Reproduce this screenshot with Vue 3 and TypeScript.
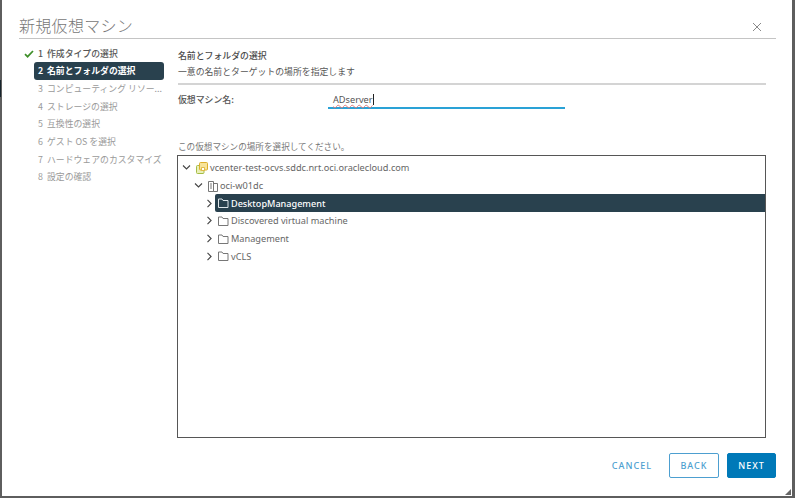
<script setup lang="ts">
interface Step { n: number; label: string; state: 'done' | 'active' | 'todo' }
const steps: Step[] = [
  { n: 1, label: '作成タイプの選択', state: 'done' },
  { n: 2, label: '名前とフォルダの選択', state: 'active' },
  { n: 3, label: 'コンピューティング リソー...', state: 'todo' },
  { n: 4, label: 'ストレージの選択', state: 'todo' },
  { n: 5, label: '互換性の選択', state: 'todo' },
  { n: 6, label: 'ゲスト OS を選択', state: 'todo' },
  { n: 7, label: 'ハードウェアのカスタマイズ', state: 'todo' },
  { n: 8, label: '設定の確認', state: 'todo' },
]
const folders = [
  { name: 'DesktopManagement', selected: true },
  { name: 'Discovered virtual machine', selected: false },
  { name: 'Management', selected: false },
  { name: 'vCLS', selected: false },
]
</script>

<template>
  <div class="modal">
    <span class="edge-mark"></span>
    <header class="head">
      <h1 class="title">新規仮想マシン</h1>
      <svg class="close" width="10" height="10" viewBox="0 0 10 10"><path d="M1 1l8 8M9 1l-8 8" stroke="#8a8a8a" stroke-width="1" fill="none"/></svg>
    </header>
    <div class="body">
      <nav class="steps">
        <div v-for="s in steps" :key="s.n" class="step" :class="s.state">
          <svg v-if="s.state === 'done'" class="check" width="10" height="8" viewBox="0 0 10 8"><path d="M1 4.2l2.6 2.5L9 1" stroke="#3f8f29" stroke-width="1.7" fill="none"/></svg>
          <span class="pill"><span class="num">{{ s.n }}</span>{{ s.label }}</span>
        </div>
      </nav>
      <main class="main">
        <div class="sub-title">名前とフォルダの選択</div>
        <div class="sub-desc">一意の名前とターゲットの場所を指定します</div>
        <div class="name-row">
          <label class="name-label">仮想マシン名:</label>
          <div class="input"><span class="val">ADserver</span><span class="caret"></span></div>
        </div>
        <div class="loc">この仮想マシンの場所を選択してください。</div>
        <div class="tree">
          <div class="row lvl0">
            <svg class="chev" width="9" height="9" viewBox="0 0 9 9"><path d="M1 2.5l3.5 3.5L8 2.5" stroke="#444" stroke-width="1.1" fill="none"/></svg>
            <svg class="ico" width="12" height="12" viewBox="0 0 12 12">
              <rect x="0.5" y="3.5" width="7.500" height="8" rx="1" fill="#e9efb8" stroke="#a5bd45"/>
              <rect x="3.5" y="0.5" width="8" height="7.500" rx="1" fill="#f7e39a" stroke="#dcae2c"/>
              <path d="M5.500 5.500h3v3h-3z" fill="#fff" stroke="#dcae2c" stroke-width=".8"/>
            </svg>
            <span>vcenter-test-ocvs.sddc.nrt.oci.oraclecloud.com</span>
          </div>
          <div class="row lvl1">
            <svg class="chev" width="9" height="9" viewBox="0 0 9 9"><path d="M1 2.5l3.5 3.5L8 2.500" stroke="#444" stroke-width="1.1" fill="none"/></svg>
            <svg class="ico" width="10" height="12" viewBox="0 0 10 12">
              <path d="M.5 1.500h5v10h-5zM5.500 3.500h4v8h-4zM2 4h2M2 6h2M2 8h2" stroke="#777" stroke-width="1" fill="none"/>
            </svg>
            <span>oci-w01dc</span>
          </div>
          <div v-for="f in folders" :key="f.name" class="row lvl2">
            <svg class="chev" width="9" height="9" viewBox="0 0 9 9"><path d="M2.500 .8l3.600 3.700-3.600 3.700" stroke="#444" stroke-width="1.1" fill="none"/></svg>
            <div class="label-wrap" :class="{ selected: f.selected }">
              <svg class="ico" width="11" height="10" viewBox="0 0 11 10">
                <path d="M.5 9.500v-8.500h3.500l1 1.500h5v7z" :stroke="f.selected ? '#dfe6ea' : '#777'" stroke-width="1" fill="none"/>
              </svg>
              <span>{{ f.name }}</span>
            </div>
          </div>
        </div>
      </main>
    </div>
    <footer class="foot">
      <span class="cancel">CANCEL</span>
      <span class="btn back">BACK</span>
      <span class="btn next">NEXT</span>
    </footer>
    <svg class="grip" width="8" height="8" viewBox="0 0 8 8"><path d="M7 1v6H1z" fill="#666"/></svg>
  </div>
</template>

<style>
html, body { margin: 0; background: #fff; }
</style>

<style scoped>
.modal {
  position: relative;
  box-sizing: border-box;
  width: 795px;
  height: 498px;
  background: #fff;
  border-left: 2px solid #5e5e5e;
  border-right: 3px solid #5e5e5e;
  border-bottom: 2px solid #5e5e5e;
  padding: 0 16px 0 17px;
  display: flex;
  flex-direction: column;
  font-family: "Noto Sans CJK JP", "Noto Sans", sans-serif;
  color: #565656;
}
.edge-mark {
  position: absolute;
  left: -2px;
  top: 80px;
  width: 1px;
  height: 17px;
  background: #16242c;
}
.head {
  height: 38px;
  border-bottom: 1px solid #c4c4c4;
  display: flex;
  align-items: flex-end;
  justify-content: space-between;
  flex: none;
}
.title {
  margin: 0 0 1px;
  font-size: 16px;
  line-height: 24px;
  font-weight: 300;
  letter-spacing: .3px;
  color: #777;
}
.close { margin: 0 14px 6px 0; }
.body { display: flex; flex: 1; min-height: 0; }
.steps {
  width: 159px;
  flex: none;
  padding-top: 5.500px;
  box-sizing: border-box;
}
.step {
  position: relative;
  height: 17.700px;
  margin-left: 15px;
  font-size: 8.850px;
  line-height: 17.700px;
  white-space: nowrap;
  color: #9a9a9a;
}
.step.done { color: #565656; font-weight: 500; }
.step.active { color: #fff; font-weight: 700; }
.step.active .pill { background: #29414e; border-radius: 3px; }
.pill { display: block; padding-left: 4px; width: 130px; box-sizing: border-box; height: 17.700px; }
.num { display: inline-block; width: 9px; }
.check { position: absolute; left: -10px; top: 5px; }
.main { flex: 1; min-width: 0; display: flex; flex-direction: column; }
.sub-title {
  margin-top: 10px;
  font-size: 8.900px;
  line-height: 14px;
  font-weight: 500;
  color: #4a4a4a;
}
.sub-desc {
  margin-top: 2px;
  font-size: 8.850px;
  line-height: 14px;
  color: #565656;
  padding-bottom: 4px;
  border-bottom: 2px solid #d4d4d4;
  width: 588px;
}
.name-row { display: flex; margin-top: 7px; height: 16px; width: 588px; }
.name-label { width: 150px; font-size: 8.900px; line-height: 16px; font-weight: 500; color: #555; }
.input {
  width: 237px;
  height: 17px;
  box-sizing: border-box;
  border-bottom: 2px solid #2aa2d6;
  padding-left: 5px;
  font-family: "Noto Sans", sans-serif;
  font-size: 9.200px;
  line-height: 17px;
  color: #555;
  display: flex;
  align-items: center;
}
.val { text-decoration: underline wavy #e07a7a 1px; text-underline-offset: 1px; }
.caret { width: 1px; height: 11px; background: #222; }
.loc { margin-top: 31px; font-size: 8.600px; line-height: 14px; color: #777; }
.tree {
  margin-top: 2px;
  margin-left: -1px;
  width: 589px;
  height: 283px;
  box-sizing: border-box;
  border: 1px solid #565656;
  padding-top: 3px;
  font-family: "Noto Sans", sans-serif;
  font-size: 9.200px;
  color: #666;
}
.row { display: flex; align-items: center; height: 17.700px; white-space: nowrap; }
.lvl0 { padding-left: 4px; }
.lvl1 { padding-left: 16px; }
.lvl2 { padding-left: 27px; }
.chev { flex: none; margin-right: 5px; }
.lvl2 .chev { margin-right: 1px; }
.lvl0 .ico { margin-right: 2px; }
.lvl1 .ico { margin-right: 2px; }
.ico { flex: none; margin-right: 2px; }
.label-wrap {
  flex: 1;
  display: flex;
  align-items: center;
  height: 17.700px;
  padding-left: 3px;
  border-radius: 2px 0 0 2px;
}
.label-wrap.selected { background: #29414e; color: #fff; font-weight: 500; font-size: 9.100px; }
.foot {
  flex: none;
  height: 58px;
  display: flex;
  align-items: flex-start;
  justify-content: flex-end;
  padding-top: 15px;
  box-sizing: border-box;
  font-family: "Noto Sans", sans-serif;
  font-size: 9px;
  font-weight: 500;
  letter-spacing: 1px;
}
.cancel { color: #4d9fd0; margin-right: 17px; line-height: 25px; }
.btn {
  height: 25px;
  box-sizing: border-box;
  border-radius: 2px;
  text-align: center;
  line-height: 23px;
  border: 1px solid #4d9fd0;
}
.back { width: 50px; color: #4d9fd0; margin-right: 8px; }
.next { width: 49px; background: #0079b8; border-color: #0079b8; color: #fff; }
.grip { position: absolute; right: 0; bottom: 0; }
</style>
